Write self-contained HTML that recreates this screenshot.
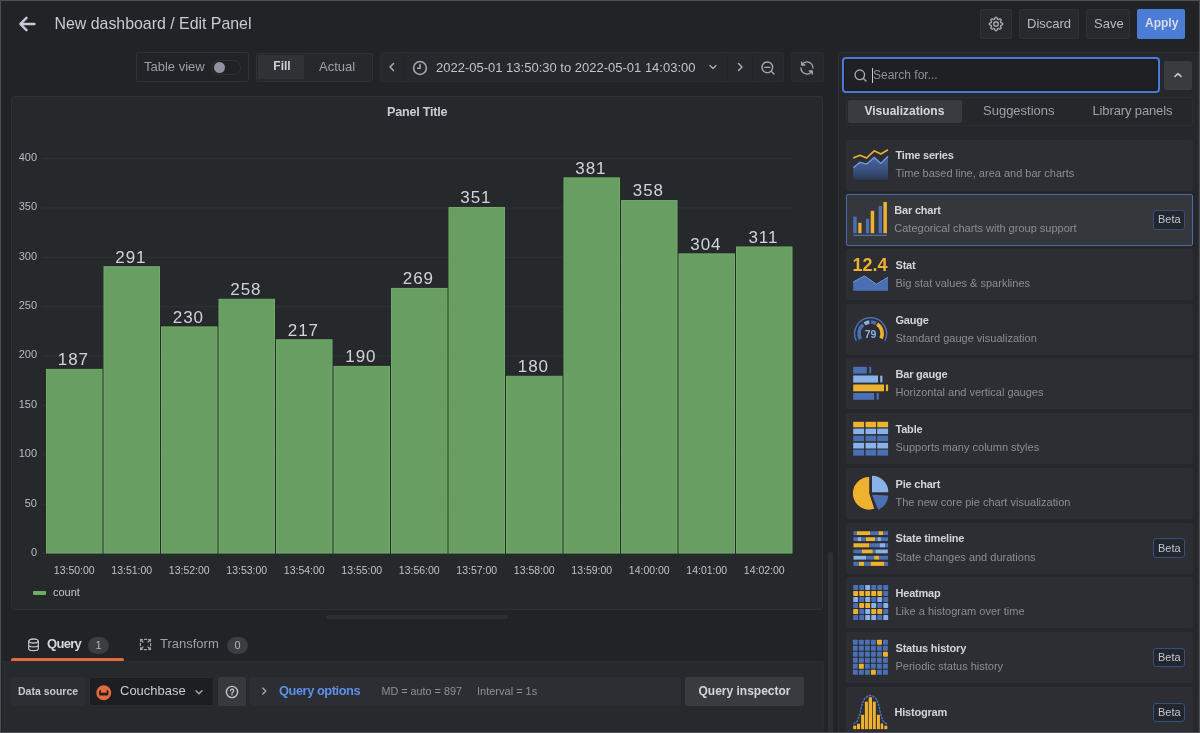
<!DOCTYPE html>
<html><head><meta charset="utf-8">
<style>
*{box-sizing:border-box;margin:0;padding:0}
html,body{width:1200px;height:733px;overflow:hidden;background:#212327}
body{font-family:"Liberation Sans",sans-serif;color:#c9cad2;position:relative;-webkit-font-smoothing:antialiased}
.layer{position:absolute;left:0;top:0;width:1200px;height:733px;will-change:transform}
svg text{font-family:"Liberation Sans",sans-serif}
.abs{position:absolute}
#frame{position:absolute;left:0;top:0;width:1200px;height:733px;border:1px solid #4b4e55;pointer-events:none;z-index:50}
.btn{position:absolute;background:#27292d;border:1px solid #2f3135;border-radius:2px}
.t{position:absolute;white-space:pre;line-height:1}
.card{position:absolute;left:846px;width:346.5px;height:51px;background:#2c2e33;border-radius:2px}
.ct{position:absolute;left:49.5px;top:11px;font-size:10.5px;font-weight:bold;color:#d3d4db;white-space:pre;line-height:1}
.cd{position:absolute;left:49.5px;top:29px;font-size:11px;color:#8f9098;white-space:pre;line-height:1}
.ic{position:absolute;left:6px;top:8px}
.beta{position:absolute;left:307px;top:15.5px;width:32px;height:19.5px;border:1px solid #3a5583;border-radius:3px;background:#2a2f3a;font-size:11px;color:#c3c5cf;text-align:center;line-height:17.5px}
</style></head><body>
<div id="frame"></div>
<div class="layer">

<!-- TOP BAR -->
<svg class="abs" style="left:18px;top:15px" width="18" height="18" viewBox="0 0 18 18">
<path d="M16.5 9H2.5M8.5 2.8L2.3 9l6.2 6.2" stroke="#c9cad6" stroke-width="2.4" fill="none" stroke-linecap="round" stroke-linejoin="round"/></svg>
<div class="t" style="left:54.5px;top:15.9px;font-size:15.9px;color:#cacbd3">New dashboard / Edit Panel</div>

<div class="btn" style="left:980px;top:9px;width:32px;height:30px"></div>
<svg class="abs" style="left:987px;top:14.8px" width="18" height="18" viewBox="0 0 18 18"><circle cx="9" cy="9" r="2.2" fill="none" stroke="#a9aab4" stroke-width="1.4"/><path d="M15.60 9.00L15.59 9.26L15.58 9.52L15.51 9.77L15.12 9.97L14.69 10.13L14.26 10.26L13.86 10.37L13.76 10.55L13.69 10.73L13.62 10.91L13.54 11.09L13.46 11.27L13.40 11.47L13.61 11.82L13.82 12.22L14.01 12.64L14.15 13.06L14.02 13.29L13.85 13.48L13.67 13.67L13.48 13.85L13.29 14.02L13.06 14.15L12.64 14.01L12.22 13.82L11.82 13.61L11.47 13.40L11.27 13.46L11.09 13.54L10.91 13.62L10.73 13.69L10.55 13.76L10.37 13.86L10.26 14.26L10.13 14.69L9.97 15.12L9.77 15.51L9.52 15.58L9.26 15.59L9.00 15.60L8.74 15.59L8.48 15.58L8.23 15.51L8.03 15.12L7.87 14.69L7.74 14.26L7.63 13.86L7.45 13.76L7.27 13.69L7.09 13.62L6.91 13.54L6.73 13.46L6.53 13.40L6.18 13.61L5.78 13.82L5.36 14.01L4.94 14.15L4.71 14.02L4.52 13.85L4.33 13.67L4.15 13.48L3.98 13.29L3.85 13.06L3.99 12.64L4.18 12.22L4.39 11.82L4.60 11.47L4.54 11.27L4.46 11.09L4.38 10.91L4.31 10.73L4.24 10.55L4.14 10.37L3.74 10.26L3.31 10.13L2.88 9.97L2.49 9.77L2.42 9.52L2.41 9.26L2.40 9.00L2.41 8.74L2.42 8.48L2.49 8.23L2.88 8.03L3.31 7.87L3.74 7.74L4.14 7.63L4.24 7.45L4.31 7.27L4.38 7.09L4.46 6.91L4.54 6.73L4.60 6.53L4.39 6.18L4.18 5.78L3.99 5.36L3.85 4.94L3.98 4.71L4.15 4.52L4.33 4.33L4.52 4.15L4.71 3.98L4.94 3.85L5.36 3.99L5.78 4.18L6.18 4.39L6.53 4.60L6.73 4.54L6.91 4.46L7.09 4.38L7.27 4.31L7.45 4.24L7.63 4.14L7.74 3.74L7.87 3.31L8.03 2.88L8.23 2.49L8.48 2.42L8.74 2.41L9.00 2.40L9.26 2.41L9.52 2.42L9.77 2.49L9.97 2.88L10.13 3.31L10.26 3.74L10.37 4.14L10.55 4.24L10.73 4.31L10.91 4.38L11.09 4.46L11.27 4.54L11.47 4.60L11.82 4.39L12.22 4.18L12.64 3.99L13.06 3.85L13.29 3.98L13.48 4.15L13.67 4.33L13.85 4.52L14.02 4.71L14.15 4.94L14.01 5.36L13.82 5.78L13.61 6.18L13.40 6.53L13.46 6.73L13.54 6.91L13.62 7.09L13.69 7.27L13.76 7.45L13.86 7.63L14.26 7.74L14.69 7.87L15.12 8.03L15.51 8.23L15.58 8.48L15.59 8.74L15.60 9.00Z" fill="none" stroke="#a9aab4" stroke-width="1.35" stroke-linejoin="round"/></svg>
<div class="btn" style="left:1019px;top:9px;width:60px;height:30px"></div>
<div class="t" style="left:1027px;top:16.7px;font-size:13px;color:#b9bac3">Discard</div>
<div class="btn" style="left:1086px;top:9px;width:44px;height:30px"></div>
<div class="t" style="left:1094px;top:16.7px;font-size:13px;color:#b9bac3">Save</div>
<div class="abs" style="left:1137px;top:9px;width:48px;height:30px;background:#4b7cd6;border-radius:2px"></div>
<div class="t" style="left:1145px;top:17.2px;font-size:12px;color:#d5dbea;font-weight:bold">Apply</div>

<!-- TOOLBAR -->
<div class="btn" style="left:136px;top:52px;width:113px;height:30px;background:#212327;border-color:#2f3136"></div>
<div class="t" style="left:144px;top:59.7px;font-size:13px;color:#9d9ea7">Table view</div>
<div class="abs" style="left:211px;top:59.5px;width:30px;height:15px;border-radius:8px;background:#1f2124;border:1px solid #303236"></div>
<div class="abs" style="left:214px;top:61.5px;width:11px;height:11px;border-radius:6px;background:#9092a0"></div>

<div class="btn" style="left:256px;top:52.5px;width:117px;height:29px;background:#26292c;border-color:#2e3034"></div>
<div class="abs" style="left:258px;top:55px;width:46px;height:24px;background:#303236;border-radius:1px"></div>
<div class="t" style="left:273.3px;top:60.3px;font-size:12px;font-weight:bold;color:#d0d1d9">Fill</div>
<div class="t" style="left:319px;top:60.2px;font-size:13px;color:#9fa0a8">Actual</div>

<div class="btn" style="left:380px;top:52px;width:404px;height:30px;background:#26282c;border-color:#2a2c30"></div>
<div class="abs" style="left:404px;top:53px;width:1px;height:28px;background:#222428"></div>
<div class="abs" style="left:727px;top:53px;width:1px;height:28px;background:#222428"></div>
<div class="abs" style="left:752px;top:53px;width:1px;height:28px;background:#222428"></div>
<svg class="abs" style="left:386px;top:61px" width="12" height="12" viewBox="0 0 12 12"><path d="M7.5 2.5L4 6l3.5 3.5" stroke="#a9aab3" stroke-width="1.5" fill="none" stroke-linecap="round" stroke-linejoin="round"/></svg>
<svg class="abs" style="left:412px;top:60px" width="16" height="16" viewBox="0 0 16 16"><circle cx="8" cy="8" r="6.4" fill="none" stroke="#a9aab3" stroke-width="1.5"/><path d="M8 4.6V8.2H5.6" stroke="#a9aab3" stroke-width="1.5" fill="none" stroke-linecap="round"/></svg>
<div class="t" style="left:436px;top:60.5px;font-size:13px;color:#c2c3cb">2022-05-01 13:50:30 to 2022-05-01 14:03:00</div>
<svg class="abs" style="left:707px;top:61px" width="12" height="12" viewBox="0 0 12 12"><path d="M3 4.5L6 7.5l3-3" stroke="#a9aab3" stroke-width="1.4" fill="none" stroke-linecap="round" stroke-linejoin="round"/></svg>
<svg class="abs" style="left:734px;top:61px" width="12" height="12" viewBox="0 0 12 12"><path d="M4.5 2.5L8 6l-3.5 3.5" stroke="#a9aab3" stroke-width="1.5" fill="none" stroke-linecap="round" stroke-linejoin="round"/></svg>
<svg class="abs" style="left:759.5px;top:59.5px" width="16" height="16" viewBox="0 0 24 24"><path fill="#a9aab3" d="M21.71 20.29 18 16.61A9 9 0 1 0 16.61 18l3.68 3.68a1 1 0 0 0 1.42 0A1 1 0 0 0 21.71 20.29ZM11 18a7 7 0 1 1 7-7A7 7 0 0 1 11 18Zm4-8H7a1 1 0 0 0 0 2h8a1 1 0 0 0 0-2Z"/></svg>
<div class="btn" style="left:791px;top:52px;width:33px;height:30px;background:#26282c;border-color:#2a2c30"></div>
<svg class="abs" style="left:799px;top:59.5px" width="16" height="16" viewBox="0 0 24 24"><path fill="#a9aab3" d="M19.91 15.51H15.38a1 1 0 0 0 0 2h2.4A8 8 0 0 1 4 12a1 1 0 0 0-2 0 10 10 0 0 0 16.88 7.23V21a1 1 0 0 0 2 0V16.5A1 1 0 0 0 19.91 15.51ZM12 2A10 10 0 0 0 5.12 4.77V3a1 1 0 0 0-2 0V7.5a1 1 0 0 0 1 1h4.5a1 1 0 0 0 0-2H6.22A8 8 0 0 1 20 12a1 1 0 0 0 2 0A10 10 0 0 0 12 2Z"/></svg>

<!-- PANEL -->
<div class="abs" style="left:10.5px;top:96px;width:812.5px;height:513.5px;background:#26292c;border:1px solid #2e3034;border-radius:3px"></div>
<div class="t" style="left:387px;top:106.2px;font-size:12.6px;font-weight:bold;letter-spacing:-0.22px;color:#cacbd4">Panel Title</div>
<svg class="abs" style="left:0;top:0" width="840" height="610" viewBox="0 0 840 610">
<line x1="42" x2="793" y1="553.50" y2="553.50" stroke="#303337" stroke-width="1"/>
<text x="37" y="555.90" text-anchor="end" font-size="11" fill="#b9bac2">0</text>
<line x1="42" x2="793" y1="504.14" y2="504.14" stroke="#303337" stroke-width="1"/>
<text x="37" y="506.54" text-anchor="end" font-size="11" fill="#b9bac2">50</text>
<line x1="42" x2="793" y1="454.77" y2="454.77" stroke="#303337" stroke-width="1"/>
<text x="37" y="457.17" text-anchor="end" font-size="11" fill="#b9bac2">100</text>
<line x1="42" x2="793" y1="405.41" y2="405.41" stroke="#303337" stroke-width="1"/>
<text x="37" y="407.81" text-anchor="end" font-size="11" fill="#b9bac2">150</text>
<line x1="42" x2="793" y1="356.05" y2="356.05" stroke="#303337" stroke-width="1"/>
<text x="37" y="358.45" text-anchor="end" font-size="11" fill="#b9bac2">200</text>
<line x1="42" x2="793" y1="306.69" y2="306.69" stroke="#303337" stroke-width="1"/>
<text x="37" y="309.09" text-anchor="end" font-size="11" fill="#b9bac2">250</text>
<line x1="42" x2="793" y1="257.32" y2="257.32" stroke="#303337" stroke-width="1"/>
<text x="37" y="259.72" text-anchor="end" font-size="11" fill="#b9bac2">300</text>
<line x1="42" x2="793" y1="207.96" y2="207.96" stroke="#303337" stroke-width="1"/>
<text x="37" y="210.36" text-anchor="end" font-size="11" fill="#b9bac2">350</text>
<line x1="42" x2="793" y1="158.60" y2="158.60" stroke="#303337" stroke-width="1"/>
<text x="37" y="161.00" text-anchor="end" font-size="11" fill="#b9bac2">400</text>
<rect x="46.50" y="369.38" width="55.50" height="183.62" fill="#689e62" stroke="#6fab67" stroke-width="1"/>
<text x="73.35" y="365.28" text-anchor="middle" font-size="17" letter-spacing="0.9" fill="#d2d3da">187</text>
<text x="74.25" y="574.00" text-anchor="middle" font-size="10.5" fill="#c0c1c8">13:50:00</text>
<rect x="104.00" y="266.71" width="55.50" height="286.29" fill="#689e62" stroke="#6fab67" stroke-width="1"/>
<text x="130.85" y="262.61" text-anchor="middle" font-size="17" letter-spacing="0.9" fill="#d2d3da">291</text>
<text x="131.75" y="574.00" text-anchor="middle" font-size="10.5" fill="#c0c1c8">13:51:00</text>
<rect x="161.50" y="326.93" width="55.50" height="226.07" fill="#689e62" stroke="#6fab67" stroke-width="1"/>
<text x="188.35" y="322.83" text-anchor="middle" font-size="17" letter-spacing="0.9" fill="#d2d3da">230</text>
<text x="189.25" y="574.00" text-anchor="middle" font-size="10.5" fill="#c0c1c8">13:52:00</text>
<rect x="219.00" y="299.29" width="55.50" height="253.71" fill="#689e62" stroke="#6fab67" stroke-width="1"/>
<text x="245.85" y="295.19" text-anchor="middle" font-size="17" letter-spacing="0.9" fill="#d2d3da">258</text>
<text x="246.75" y="574.00" text-anchor="middle" font-size="10.5" fill="#c0c1c8">13:53:00</text>
<rect x="276.50" y="339.77" width="55.50" height="213.23" fill="#689e62" stroke="#6fab67" stroke-width="1"/>
<text x="303.35" y="335.67" text-anchor="middle" font-size="17" letter-spacing="0.9" fill="#d2d3da">217</text>
<text x="304.25" y="574.00" text-anchor="middle" font-size="10.5" fill="#c0c1c8">13:54:00</text>
<rect x="334.00" y="366.42" width="55.50" height="186.58" fill="#689e62" stroke="#6fab67" stroke-width="1"/>
<text x="360.85" y="362.32" text-anchor="middle" font-size="17" letter-spacing="0.9" fill="#d2d3da">190</text>
<text x="361.75" y="574.00" text-anchor="middle" font-size="10.5" fill="#c0c1c8">13:55:00</text>
<rect x="391.50" y="288.43" width="55.50" height="264.57" fill="#689e62" stroke="#6fab67" stroke-width="1"/>
<text x="418.35" y="284.33" text-anchor="middle" font-size="17" letter-spacing="0.9" fill="#d2d3da">269</text>
<text x="419.25" y="574.00" text-anchor="middle" font-size="10.5" fill="#c0c1c8">13:56:00</text>
<rect x="449.00" y="207.48" width="55.50" height="345.52" fill="#689e62" stroke="#6fab67" stroke-width="1"/>
<text x="475.85" y="203.38" text-anchor="middle" font-size="17" letter-spacing="0.9" fill="#d2d3da">351</text>
<text x="476.75" y="574.00" text-anchor="middle" font-size="10.5" fill="#c0c1c8">13:57:00</text>
<rect x="506.50" y="376.30" width="55.50" height="176.70" fill="#689e62" stroke="#6fab67" stroke-width="1"/>
<text x="533.35" y="372.19" text-anchor="middle" font-size="17" letter-spacing="0.9" fill="#d2d3da">180</text>
<text x="534.25" y="574.00" text-anchor="middle" font-size="10.5" fill="#c0c1c8">13:58:00</text>
<rect x="564.00" y="177.86" width="55.50" height="375.14" fill="#689e62" stroke="#6fab67" stroke-width="1"/>
<text x="590.85" y="173.76" text-anchor="middle" font-size="17" letter-spacing="0.9" fill="#d2d3da">381</text>
<text x="591.75" y="574.00" text-anchor="middle" font-size="10.5" fill="#c0c1c8">13:59:00</text>
<rect x="621.50" y="200.56" width="55.50" height="352.44" fill="#689e62" stroke="#6fab67" stroke-width="1"/>
<text x="648.35" y="196.46" text-anchor="middle" font-size="17" letter-spacing="0.9" fill="#d2d3da">358</text>
<text x="649.25" y="574.00" text-anchor="middle" font-size="10.5" fill="#c0c1c8">14:00:00</text>
<rect x="679.00" y="253.88" width="55.50" height="299.12" fill="#689e62" stroke="#6fab67" stroke-width="1"/>
<text x="705.85" y="249.78" text-anchor="middle" font-size="17" letter-spacing="0.9" fill="#d2d3da">304</text>
<text x="706.75" y="574.00" text-anchor="middle" font-size="10.5" fill="#c0c1c8">14:01:00</text>
<rect x="736.50" y="246.97" width="55.50" height="306.03" fill="#689e62" stroke="#6fab67" stroke-width="1"/>
<text x="763.35" y="242.87" text-anchor="middle" font-size="17" letter-spacing="0.9" fill="#d2d3da">311</text>
<text x="764.25" y="574.00" text-anchor="middle" font-size="10.5" fill="#c0c1c8">14:02:00</text>
</svg>
<div class="abs" style="left:33px;top:591px;width:12.5px;height:3.5px;background:#6cae64;border-radius:1px"></div>
<div class="t" style="left:53px;top:586.5px;font-size:11px;color:#c4c5cc">count</div>
<div class="abs" style="left:326px;top:615px;width:182px;height:4px;background:#2d2f33;border-radius:2px"></div>

<!-- QUERY TABS -->
<svg class="abs" style="left:26.5px;top:638.3px" width="13" height="14" viewBox="0 0 13 14"><ellipse cx="6.5" cy="3" rx="4.8" ry="2" fill="none" stroke="#c4c5cd" stroke-width="1.3"/><path d="M1.7 3v7.8c0 1.1 2.1 1.9 4.8 1.9s4.8-.8 4.8-1.9V3M1.7 7c0 1.1 2.1 1.9 4.8 1.9s4.8-.8 4.8-1.9" fill="none" stroke="#c4c5cd" stroke-width="1.2"/></svg>
<div class="t" style="left:47px;top:637.3px;font-size:13px;font-weight:bold;letter-spacing:-0.7px;color:#d6d7de">Query</div>
<div class="abs" style="left:88px;top:637px;width:21px;height:17px;border-radius:9px;background:#3b3d41"></div>
<div class="t" style="left:95.5px;top:640.2px;font-size:11px;color:#b4b5bd">1</div>
<svg class="abs" style="left:139px;top:638.3px" width="13" height="13" viewBox="0 0 13 13"><g fill="#a3a4ac"><path d="M0.8 0.8L4.4 1.3L1.3 4.4Z"/><path d="M12.2 0.8L11.7 4.4L8.6 1.3Z"/><path d="M12.2 12.2L8.6 11.7L11.7 8.6Z"/><path d="M0.8 12.2L1.3 8.6L4.4 11.7Z"/></g><g fill="none" stroke="#a3a4ac" stroke-width="1.2" stroke-linecap="round"><path d="M2.2 2.2L4 4"/><path d="M10.8 2.2L9 4"/><path d="M10.8 10.8L9 9"/><path d="M2.2 10.8L4 9"/><path d="M5.6 1.4H7.6"/><path d="M11.6 5.6V7.6"/><path d="M7.4 11.6H5.4"/><path d="M1.4 7.4V5.4"/></g></svg>
<div class="t" style="left:160px;top:637.3px;font-size:13px;color:#9fa0a8">Transform</div>
<div class="abs" style="left:227px;top:637px;width:21px;height:17px;border-radius:9px;background:#3b3d41"></div>
<div class="t" style="left:234.5px;top:640.2px;font-size:11px;color:#b4b5bd">0</div>
<div class="abs" style="left:11px;top:657.5px;width:113px;height:4px;background:#e4693d;border-radius:2px"></div>

<!-- QUERY EDITOR -->
<div class="abs" style="left:1px;top:661px;width:822.5px;height:80px;background:#272a2d;box-shadow:inset 1px 0 0 #1f2124;border-top:1px solid #2a2c30;border-right:1px solid #2a2c30;border-radius:0 3px 0 0"></div>
<div class="abs" style="left:11px;top:677px;width:73.5px;height:28.5px;background:#2c2e33;border-radius:2px"></div>
<div class="t" style="left:18px;top:686px;font-size:10.5px;font-weight:bold;color:#c8c9d0">Data source</div>
<div class="abs" style="left:89px;top:677px;width:124.5px;height:28.5px;background:#1d1e22;border:1px solid #2b2d31;border-radius:2px"></div>
<svg class="abs" style="left:96px;top:685px" width="15.5" height="15.5" viewBox="0 0 16 16"><circle cx="8" cy="8" r="7.7" fill="#e56a3a"/><rect x="3.2" y="5.2" width="9.6" height="5.6" rx="1.6" fill="#2a1d19"/><rect x="5" y="5" width="6" height="3" rx="0.6" fill="#e56a3a"/></svg>
<div class="t" style="left:120px;top:684px;font-size:13px;color:#c9cad2">Couchbase</div>
<svg class="abs" style="left:193px;top:686px" width="12" height="12" viewBox="0 0 12 12"><path d="M3 4.8L6 7.8l3-3" stroke="#a9aab3" stroke-width="1.4" fill="none" stroke-linecap="round" stroke-linejoin="round"/></svg>
<div class="abs" style="left:218px;top:677px;width:28px;height:28.5px;background:#37393d;border-radius:2px"></div>
<svg class="abs" style="left:224px;top:683.5px" width="16" height="16" viewBox="0 0 16 16"><circle cx="8" cy="8" r="5.6" fill="none" stroke="#c4c5cd" stroke-width="1.4"/><path d="M6.5 6.6a1.6 1.6 0 1 1 2.2 1.5c-.4.2-.7.5-.7 1v.2" stroke="#c4c5cd" stroke-width="1.3" fill="none" stroke-linecap="round"/><circle cx="8" cy="10.8" r=".75" fill="#c4c5cd"/></svg>
<div class="abs" style="left:249.5px;top:677px;width:431px;height:28.5px;background:#2c2e33;border-radius:2px"></div>
<svg class="abs" style="left:258px;top:685px" width="12" height="12" viewBox="0 0 12 12"><path d="M4.8 3L7.8 6l-3 3" stroke="#a9aab3" stroke-width="1.3" fill="none" stroke-linecap="round" stroke-linejoin="round"/></svg>
<div class="t" style="left:279px;top:684.6px;font-size:12.8px;font-weight:bold;letter-spacing:-0.43px;color:#5f90e6">Query options</div>
<div class="t" style="left:381.5px;top:685.6px;font-size:10.8px;color:#8f9098">MD = auto = 897</div>
<div class="t" style="left:477px;top:685.6px;font-size:11px;color:#8f9098">Interval = 1s</div>
<div class="abs" style="left:685px;top:677px;width:119px;height:28.5px;background:#393b3f;border-radius:2px"></div>
<div class="t" style="left:698.5px;top:685px;font-size:12px;font-weight:bold;color:#d4d5dc">Query inspector</div>

<!-- scrollbar left pane -->
<div class="abs" style="left:828px;top:552px;width:5px;height:181px;background:#2d2f33;border-radius:3px"></div>

<!-- RIGHT PANE -->
<div class="abs" style="left:838px;top:52px;width:361px;height:681px;background:#25272b;border:1px solid #2c2e32;border-right-color:#2c2e32"></div>
<div class="abs" style="left:842px;top:57px;width:318px;height:36px;background:#1f2024;border:2px solid #4a7bd2;border-radius:4px;box-shadow:inset 0 0 0 1px #18191c"></div>
<svg class="abs" style="left:852.5px;top:68px" width="16" height="16" viewBox="0 0 16 16"><circle cx="6.8" cy="6.8" r="4.8" fill="none" stroke="#a7a8b0" stroke-width="1.3"/><path d="M10.4 10.4l2.6 2.6" stroke="#a7a8b0" stroke-width="1.4" stroke-linecap="round"/></svg>
<div class="abs" style="left:872px;top:67.5px;width:1px;height:15px;background:#c9cad2"></div>
<div class="t" style="left:873px;top:68.5px;font-size:12px;color:#8e8f97">Search for...</div>
<div class="abs" style="left:1163.5px;top:60.5px;width:28.5px;height:29.5px;background:#393b3f;border-radius:2px"></div>
<svg class="abs" style="left:1171px;top:69px" width="14" height="12" viewBox="0 0 14 12"><path d="M4 7.4L7 4.6l3 2.8" stroke="#c9cad2" stroke-width="1.5" fill="none" stroke-linecap="round" stroke-linejoin="round"/></svg>

<div class="abs" style="left:845.5px;top:97px;width:347px;height:28.5px;background:#25272b;border:1px solid #2c2e32;border-radius:2px"></div>
<div class="abs" style="left:848px;top:99.5px;width:113.5px;height:23px;background:#393b40;border-radius:2px"></div>
<div class="t" style="left:864.5px;top:104.5px;font-size:12px;font-weight:bold;color:#d4d5dc">Visualizations</div>
<div class="t" style="left:983px;top:104px;font-size:13px;color:#9fa0a8">Suggestions</div>
<div class="t" style="left:1092.5px;top:104px;font-size:13px;letter-spacing:-0.13px;color:#9fa0a8">Library panels</div>

<div class="card" style="top:139.5px;background:#2c2e33;"></div>
<svg class="abs" style="left:846px;top:139.5px" width="50" height="50" viewBox="0 0 50 50"><defs><linearGradient id="tsg" x1="0" y1="0" x2="0" y2="1"><stop offset="0" stop-color="#4a68a6"/><stop offset="0.55" stop-color="#3a5282"/><stop offset="1" stop-color="#2c3652"/></linearGradient></defs><polygon points="7.2,40.0 7.2,27.8 14.0,22.3 20.6,24.1 28.2,17.5 34.8,23.4 42.0,16.2 42.0,40.0" fill="url(#tsg)"/><polyline points="7.2,27.8 14.0,22.3 20.6,24.1 28.2,17.5 34.8,23.4 42.0,16.2" fill="none" stroke="#6f9ae0" stroke-width="1.4"/><polyline points="7.2,18.0 14.0,15.3 20.6,18.0 28.2,10.8 34.8,14.0 42.0,9.7" fill="none" stroke="#efb22e" stroke-width="1.6" stroke-linejoin="round"/></svg>
<div class="t" style="left:895.5px;top:150.3px;font-size:11px;font-weight:bold;letter-spacing:-0.2px;color:#d3d4db">Time series</div>
<div class="t" style="left:895.5px;top:168.4px;font-size:11px;color:#8c8d95">Time based line, area and bar charts</div>
<div class="card" style="top:194.2px;background:#35373c;border:1px solid #4a6eaa;height:52px;"></div>
<svg class="abs" style="left:846px;top:194.2px" width="50" height="50" viewBox="0 0 50 50"><rect x="7.2" y="22.7" width="3.5" height="16.5" fill="#4a6fb3"/><rect x="12.3" y="28.8" width="3.2" height="10.4" fill="#efb22e"/><rect x="19.9" y="24.8" width="3.3" height="14.4" fill="#4a6fb3"/><rect x="24.7" y="16.8" width="3.5" height="22.4" fill="#efb22e"/><rect x="32.6" y="12.0" width="3.4" height="27.2" fill="#4a6fb3"/><rect x="37.4" y="8.0" width="3.5" height="31.2" fill="#efb22e"/><rect x="7.2" y="40.7" width="33.7" height="1.3" fill="#4a6fb3"/></svg>
<div class="t" style="left:894.3px;top:205.0px;font-size:11px;font-weight:bold;letter-spacing:-0.2px;color:#d3d4db">Bar chart</div>
<div class="t" style="left:894.3px;top:223.1px;font-size:11px;color:#8c8d95">Categorical charts with group support</div>
<div class="abs" style="left:1153px;top:210.0px;width:32px;height:19.7px;border:1px solid #35507e;border-radius:3px;background:#22262e"></div>
<div class="t" style="left:1158px;top:214.3px;font-size:11px;color:#c3c5cf">Beta</div>
<div class="card" style="top:248.9px;background:#2c2e33;"></div>
<svg class="abs" style="left:846px;top:248.9px" width="50" height="50" viewBox="0 0 50 50"><polygon points="7.2,41.8 7.2,32.9 18.4,26.9 30.4,35.2 42.0,28.2 42.0,41.8" fill="#4a6fb3"/><polyline points="7.2,32.9 18.4,26.9 30.4,35.2 42.0,28.2" fill="none" stroke="#6f9ae0" stroke-width="1"/><text x="6.5" y="21.7" font-size="17.8" font-weight="bold" fill="#efb22e" textLength="35" lengthAdjust="spacingAndGlyphs">12.4</text></svg>
<div class="t" style="left:895.5px;top:259.8px;font-size:11px;font-weight:bold;letter-spacing:-0.2px;color:#d3d4db">Stat</div>
<div class="t" style="left:895.5px;top:277.8px;font-size:11px;color:#8c8d95">Big stat values &amp; sparklines</div>
<div class="card" style="top:303.7px;background:#2c2e33;"></div>
<svg class="abs" style="left:846px;top:303.7px" width="50" height="50" viewBox="0 0 50 50"><path d="M10.34 36.89A16 16 0 1 1 38.86 36.89" fill="none" stroke="#4a6fb3" stroke-width="1.5"/><path d="M14.36 35.07A11.6 11.6 0 0 1 17.14 20.74" fill="none" stroke="#4a6fb3" stroke-width="3.6"/><path d="M18.45 19.79A11.6 11.6 0 0 1 23.39 18.09" fill="none" stroke="#8ab2ea" stroke-width="3.6"/><path d="M25.00 18.03A11.6 11.6 0 0 1 30.05 19.38" fill="none" stroke="#4a6fb3" stroke-width="3.6"/><path d="M31.09 20.01A11.6 11.6 0 0 1 35.11 34.53" fill="none" stroke="#efb22e" stroke-width="3.6"/><text x="24.6" y="33.9" text-anchor="middle" font-size="10.5" font-weight="bold" fill="#8ab2ea">79</text></svg>
<div class="t" style="left:895.5px;top:314.5px;font-size:11px;font-weight:bold;letter-spacing:-0.2px;color:#d3d4db">Gauge</div>
<div class="t" style="left:895.5px;top:332.6px;font-size:11px;color:#8c8d95">Standard gauge visualization</div>
<div class="card" style="top:358.4px;background:#2c2e33;"></div>
<svg class="abs" style="left:846px;top:358.4px" width="50" height="50" viewBox="0 0 50 50"><rect x="7.2" y="8.8" width="13.6" height="6.8" fill="#4a6fb3"/><rect x="23.3" y="8.8" width="1.9" height="6.8" rx="0.8" fill="#4a6fb3"/><rect x="7.2" y="17.5" width="24.8" height="7.1" fill="#8ab2ea"/><rect x="34.2" y="17.5" width="2.2" height="7.1" rx="0.8" fill="#8ab2ea"/><rect x="7.2" y="26.5" width="30.8" height="6.8" fill="#efb22e"/><rect x="39.9" y="26.5" width="2.2" height="6.8" rx="0.8" fill="#efb22e"/><rect x="7.2" y="35.0" width="21.0" height="6.8" fill="#4a6fb3"/><rect x="30.6" y="35.0" width="2.2" height="6.8" rx="0.8" fill="#4a6fb3"/></svg>
<div class="t" style="left:895.5px;top:369.2px;font-size:11px;font-weight:bold;letter-spacing:-0.2px;color:#d3d4db">Bar gauge</div>
<div class="t" style="left:895.5px;top:387.3px;font-size:11px;color:#8c8d95">Horizontal and vertical gauges</div>
<div class="card" style="top:413.1px;background:#2c2e33;"></div>
<svg class="abs" style="left:846px;top:413.1px" width="50" height="50" viewBox="0 0 50 50"><rect x="7.2" y="8.8" width="10.9" height="5.5" fill="#efb22e"/><rect x="19.5" y="8.8" width="10.6" height="5.5" fill="#efb22e"/><rect x="31.2" y="8.8" width="10.9" height="5.5" fill="#efb22e"/><rect x="7.2" y="15.6" width="10.9" height="5.5" fill="#8ab2ea"/><rect x="19.5" y="15.6" width="10.6" height="5.5" fill="#8ab2ea"/><rect x="31.2" y="15.6" width="10.9" height="5.5" fill="#8ab2ea"/><rect x="7.2" y="22.7" width="10.9" height="5.5" fill="#4a6fb3"/><rect x="19.5" y="22.7" width="10.6" height="5.5" fill="#4a6fb3"/><rect x="31.2" y="22.7" width="10.9" height="5.5" fill="#4a6fb3"/><rect x="7.2" y="29.8" width="10.9" height="5.7" fill="#8ab2ea"/><rect x="19.5" y="29.8" width="10.6" height="5.7" fill="#8ab2ea"/><rect x="31.2" y="29.8" width="10.9" height="5.7" fill="#8ab2ea"/><rect x="7.2" y="36.6" width="10.9" height="6.0" fill="#4a6fb3"/><rect x="19.5" y="36.6" width="10.6" height="6.0" fill="#4a6fb3"/><rect x="31.2" y="36.6" width="10.9" height="6.0" fill="#4a6fb3"/></svg>
<div class="t" style="left:895.5px;top:423.9px;font-size:11px;font-weight:bold;letter-spacing:-0.2px;color:#d3d4db">Table</div>
<div class="t" style="left:895.5px;top:442.0px;font-size:11px;color:#8c8d95">Supports many column styles</div>
<div class="card" style="top:467.9px;background:#2c2e33;"></div>
<svg class="abs" style="left:846px;top:467.9px" width="50" height="50" viewBox="0 0 50 50"><path d="M23.20 25.35L23.20 9.05A16.3 16.3 0 1 0 28.24 40.85Z" fill="#efb22e"/><path d="M26.00 24.15L26.00 7.85A16.3 16.3 0 0 1 42.30 24.15Z" fill="#8ab2ea"/><path d="M26.00 26.75L42.28 27.60A16.3 16.3 0 0 1 32.11 41.86Z" fill="#4a6fb3"/></svg>
<div class="t" style="left:895.5px;top:478.7px;font-size:11px;font-weight:bold;letter-spacing:-0.2px;color:#d3d4db">Pie chart</div>
<div class="t" style="left:895.5px;top:496.8px;font-size:11px;color:#8c8d95">The new core pie chart visualization</div>
<div class="card" style="top:522.6px;background:#2c2e33;"></div>
<svg class="abs" style="left:846px;top:522.6px" width="50" height="50" viewBox="0 0 50 50"><rect x="7.46" y="8.24" width="3.27" height="3.82" fill="#4a6fb3"/><rect x="10.73" y="8.24" width="13.37" height="3.82" fill="#efb22e"/><rect x="24.09" y="8.24" width="8.46" height="3.82" fill="#4a6fb3"/><rect x="32.55" y="8.24" width="4.64" height="3.82" fill="#efb22e"/><rect x="37.19" y="8.24" width="4.91" height="3.82" fill="#4a6fb3"/><rect x="7.46" y="14.24" width="12.55" height="3.82" fill="#4a6fb3"/><rect x="20.00" y="14.24" width="9.27" height="3.82" fill="#efb22e"/><rect x="29.28" y="14.24" width="12.82" height="3.82" fill="#4a6fb3"/><rect x="11.82" y="14.24" width="3.27" height="3.82" fill="#8ab2ea"/><rect x="31.73" y="14.24" width="3.00" height="3.82" fill="#8ab2ea"/><rect x="7.46" y="20.25" width="15.82" height="4.09" fill="#efb22e"/><rect x="23.28" y="20.25" width="10.37" height="4.09" fill="#4a6fb3"/><rect x="33.64" y="20.25" width="5.46" height="4.09" fill="#8ab2ea"/><rect x="39.10" y="20.25" width="3.00" height="4.09" fill="#4a6fb3"/><rect x="7.46" y="26.52" width="8.46" height="3.82" fill="#4a6fb3"/><rect x="15.91" y="26.52" width="10.91" height="3.82" fill="#efb22e"/><rect x="26.82" y="26.52" width="2.73" height="3.82" fill="#4a6fb3"/><rect x="29.55" y="26.52" width="12.27" height="3.82" fill="#8ab2ea"/><rect x="7.46" y="32.79" width="12.82" height="3.82" fill="#8ab2ea"/><rect x="20.28" y="32.79" width="7.91" height="3.82" fill="#4a6fb3"/><rect x="28.19" y="32.79" width="4.91" height="3.82" fill="#efb22e"/><rect x="33.10" y="32.79" width="9.00" height="3.82" fill="#4a6fb3"/><rect x="7.46" y="38.79" width="5.46" height="4.09" fill="#4a6fb3"/><rect x="12.91" y="38.79" width="5.18" height="4.09" fill="#efb22e"/><rect x="18.09" y="38.79" width="6.55" height="4.09" fill="#4a6fb3"/><rect x="24.64" y="38.79" width="13.91" height="4.09" fill="#efb22e"/><rect x="38.55" y="38.79" width="3.55" height="4.09" fill="#4a6fb3"/></svg>
<div class="t" style="left:895.5px;top:533.4px;font-size:11px;font-weight:bold;letter-spacing:-0.2px;color:#d3d4db">State timeline</div>
<div class="t" style="left:895.5px;top:551.5px;font-size:11px;color:#8c8d95">State changes and durations</div>
<div class="abs" style="left:1153px;top:538.4px;width:32px;height:19.7px;border:1px solid #35507e;border-radius:3px;background:#22262e"></div>
<div class="t" style="left:1158px;top:542.7px;font-size:11px;color:#c3c5cf">Beta</div>
<div class="card" style="top:577.3px;background:#2c2e33;"></div>
<svg class="abs" style="left:846px;top:577.3px" width="50" height="50" viewBox="0 0 50 50"><rect x="7.20" y="8.00" width="4.9" height="4.9" rx="0.6" fill="#4a6fb3"/><rect x="13.22" y="8.00" width="4.9" height="4.9" rx="0.6" fill="#4a6fb3"/><rect x="19.24" y="8.00" width="4.9" height="4.9" rx="0.6" fill="#8ab2ea"/><rect x="25.26" y="8.00" width="4.9" height="4.9" rx="0.6" fill="#4a6fb3"/><rect x="31.28" y="8.00" width="4.9" height="4.9" rx="0.6" fill="#4a6fb3"/><rect x="37.30" y="8.00" width="4.9" height="4.9" rx="0.6" fill="#4a6fb3"/><rect x="7.20" y="14.02" width="4.9" height="4.9" rx="0.6" fill="#efb22e"/><rect x="13.22" y="14.02" width="4.9" height="4.9" rx="0.6" fill="#efb22e"/><rect x="19.24" y="14.02" width="4.9" height="4.9" rx="0.6" fill="#efb22e"/><rect x="25.26" y="14.02" width="4.9" height="4.9" rx="0.6" fill="#efb22e"/><rect x="31.28" y="14.02" width="4.9" height="4.9" rx="0.6" fill="#efb22e"/><rect x="37.30" y="14.02" width="4.9" height="4.9" rx="0.6" fill="#4a6fb3"/><rect x="7.20" y="20.04" width="4.9" height="4.9" rx="0.6" fill="#8ab2ea"/><rect x="13.22" y="20.04" width="4.9" height="4.9" rx="0.6" fill="#4a6fb3"/><rect x="19.24" y="20.04" width="4.9" height="4.9" rx="0.6" fill="#8ab2ea"/><rect x="25.26" y="20.04" width="4.9" height="4.9" rx="0.6" fill="#4a6fb3"/><rect x="31.28" y="20.04" width="4.9" height="4.9" rx="0.6" fill="#8ab2ea"/><rect x="37.30" y="20.04" width="4.9" height="4.9" rx="0.6" fill="#4a6fb3"/><rect x="7.20" y="26.06" width="4.9" height="4.9" rx="0.6" fill="#4a6fb3"/><rect x="13.22" y="26.06" width="4.9" height="4.9" rx="0.6" fill="#efb22e"/><rect x="19.24" y="26.06" width="4.9" height="4.9" rx="0.6" fill="#efb22e"/><rect x="25.26" y="26.06" width="4.9" height="4.9" rx="0.6" fill="#8ab2ea"/><rect x="31.28" y="26.06" width="4.9" height="4.9" rx="0.6" fill="#4a6fb3"/><rect x="37.30" y="26.06" width="4.9" height="4.9" rx="0.6" fill="#8ab2ea"/><rect x="7.20" y="32.08" width="4.9" height="4.9" rx="0.6" fill="#efb22e"/><rect x="13.22" y="32.08" width="4.9" height="4.9" rx="0.6" fill="#4a6fb3"/><rect x="19.24" y="32.08" width="4.9" height="4.9" rx="0.6" fill="#8ab2ea"/><rect x="25.26" y="32.08" width="4.9" height="4.9" rx="0.6" fill="#efb22e"/><rect x="31.28" y="32.08" width="4.9" height="4.9" rx="0.6" fill="#efb22e"/><rect x="37.30" y="32.08" width="4.9" height="4.9" rx="0.6" fill="#4a6fb3"/><rect x="7.20" y="38.10" width="4.9" height="4.9" rx="0.6" fill="#4a6fb3"/><rect x="13.22" y="38.10" width="4.9" height="4.9" rx="0.6" fill="#4a6fb3"/><rect x="19.24" y="38.10" width="4.9" height="4.9" rx="0.6" fill="#8ab2ea"/><rect x="25.26" y="38.10" width="4.9" height="4.9" rx="0.6" fill="#8ab2ea"/><rect x="31.28" y="38.10" width="4.9" height="4.9" rx="0.6" fill="#4a6fb3"/><rect x="37.30" y="38.10" width="4.9" height="4.9" rx="0.6" fill="#8ab2ea"/></svg>
<div class="t" style="left:895.5px;top:588.1px;font-size:11px;font-weight:bold;letter-spacing:-0.2px;color:#d3d4db">Heatmap</div>
<div class="t" style="left:895.5px;top:606.2px;font-size:11px;color:#8c8d95">Like a histogram over time</div>
<div class="card" style="top:632.0px;background:#2c2e33;"></div>
<svg class="abs" style="left:846px;top:632.0px" width="50" height="50" viewBox="0 0 50 50"><rect x="6.90" y="7.77" width="4.9" height="4.9" rx="0.6" fill="#4a6fb3"/><rect x="12.92" y="7.77" width="4.9" height="4.9" rx="0.6" fill="#4a6fb3"/><rect x="18.94" y="7.77" width="4.9" height="4.9" rx="0.6" fill="#4a6fb3"/><rect x="24.96" y="7.77" width="4.9" height="4.9" rx="0.6" fill="#4a6fb3"/><rect x="30.98" y="7.77" width="4.9" height="4.9" rx="0.6" fill="#efb22e"/><rect x="37.00" y="7.77" width="4.9" height="4.9" rx="0.6" fill="#4a6fb3"/><rect x="6.90" y="13.79" width="4.9" height="4.9" rx="0.6" fill="#4a6fb3"/><rect x="12.92" y="13.79" width="4.9" height="4.9" rx="0.6" fill="#4a6fb3"/><rect x="18.94" y="13.79" width="4.9" height="4.9" rx="0.6" fill="#4a6fb3"/><rect x="24.96" y="13.79" width="4.9" height="4.9" rx="0.6" fill="#4a6fb3"/><rect x="30.98" y="13.79" width="4.9" height="4.9" rx="0.6" fill="#4a6fb3"/><rect x="37.00" y="13.79" width="4.9" height="4.9" rx="0.6" fill="#4a6fb3"/><rect x="6.90" y="19.81" width="4.9" height="4.9" rx="0.6" fill="#4a6fb3"/><rect x="12.92" y="19.81" width="4.9" height="4.9" rx="0.6" fill="#4a6fb3"/><rect x="18.94" y="19.81" width="4.9" height="4.9" rx="0.6" fill="#4a6fb3"/><rect x="24.96" y="19.81" width="4.9" height="4.9" rx="0.6" fill="#4a6fb3"/><rect x="30.98" y="19.81" width="4.9" height="4.9" rx="0.6" fill="#4a6fb3"/><rect x="37.00" y="19.81" width="4.9" height="4.9" rx="0.6" fill="#efb22e"/><rect x="6.90" y="25.83" width="4.9" height="4.9" rx="0.6" fill="#4a6fb3"/><rect x="12.92" y="25.83" width="4.9" height="4.9" rx="0.6" fill="#4a6fb3"/><rect x="18.94" y="25.83" width="4.9" height="4.9" rx="0.6" fill="#4a6fb3"/><rect x="24.96" y="25.83" width="4.9" height="4.9" rx="0.6" fill="#4a6fb3"/><rect x="30.98" y="25.83" width="4.9" height="4.9" rx="0.6" fill="#4a6fb3"/><rect x="37.00" y="25.83" width="4.9" height="4.9" rx="0.6" fill="#4a6fb3"/><rect x="6.90" y="31.85" width="4.9" height="4.9" rx="0.6" fill="#4a6fb3"/><rect x="12.92" y="31.85" width="4.9" height="4.9" rx="0.6" fill="#efb22e"/><rect x="18.94" y="31.85" width="4.9" height="4.9" rx="0.6" fill="#4a6fb3"/><rect x="24.96" y="31.85" width="4.9" height="4.9" rx="0.6" fill="#4a6fb3"/><rect x="30.98" y="31.85" width="4.9" height="4.9" rx="0.6" fill="#4a6fb3"/><rect x="37.00" y="31.85" width="4.9" height="4.9" rx="0.6" fill="#4a6fb3"/><rect x="6.90" y="37.87" width="4.9" height="4.9" rx="0.6" fill="#4a6fb3"/><rect x="12.92" y="37.87" width="4.9" height="4.9" rx="0.6" fill="#4a6fb3"/><rect x="18.94" y="37.87" width="4.9" height="4.9" rx="0.6" fill="#4a6fb3"/><rect x="24.96" y="37.87" width="4.9" height="4.9" rx="0.6" fill="#efb22e"/><rect x="30.98" y="37.87" width="4.9" height="4.9" rx="0.6" fill="#4a6fb3"/><rect x="37.00" y="37.87" width="4.9" height="4.9" rx="0.6" fill="#4a6fb3"/></svg>
<div class="t" style="left:895.5px;top:642.8px;font-size:11px;font-weight:bold;letter-spacing:-0.2px;color:#d3d4db">Status history</div>
<div class="t" style="left:895.5px;top:660.9px;font-size:11px;color:#8c8d95">Periodic status history</div>
<div class="abs" style="left:1153px;top:647.8px;width:32px;height:19.7px;border:1px solid #35507e;border-radius:3px;background:#22262e"></div>
<div class="t" style="left:1158px;top:652.1px;font-size:11px;color:#c3c5cf">Beta</div>
<div class="card" style="top:686.8px;background:#2c2e33;"></div>
<svg class="abs" style="left:846px;top:686.8px" width="50" height="50" viewBox="0 0 50 50"><rect x="7.20" y="38.65" width="3.00" height="3.50" fill="#efb22e"/><rect x="11.00" y="36.75" width="3.00" height="5.40" fill="#efb22e"/><rect x="15.10" y="27.75" width="3.00" height="14.40" fill="#efb22e"/><rect x="18.90" y="14.65" width="3.00" height="27.50" fill="#efb22e"/><rect x="22.70" y="10.25" width="3.30" height="31.90" fill="#efb22e"/><rect x="26.80" y="14.65" width="3.00" height="27.50" fill="#efb22e"/><rect x="30.90" y="27.75" width="3.00" height="14.40" fill="#efb22e"/><rect x="34.70" y="36.45" width="2.50" height="5.70" fill="#efb22e"/><rect x="38.30" y="38.65" width="3.00" height="3.50" fill="#efb22e"/><polyline points="8.00,36.75 11.30,34.25 12.90,29.85 14.30,25.25 15.10,20.65 16.50,15.95 18.40,11.85 21.90,8.85 24.20,8.45 26.50,8.85 30.10,11.85 32.00,15.95 33.40,20.65 34.20,25.25 35.60,29.85 37.20,34.25 40.50,36.75" fill="none" stroke="#4a6fb3" stroke-width="1.5" stroke-dasharray="1.3 2.1" stroke-linecap="round" stroke-linejoin="round"/></svg>
<div class="t" style="left:894.5px;top:707.4px;font-size:11px;font-weight:bold;letter-spacing:-0.2px;color:#d3d4db">Histogram</div>
<div class="abs" style="left:1153px;top:702.5px;width:32px;height:19.7px;border:1px solid #35507e;border-radius:3px;background:#22262e"></div>
<div class="t" style="left:1158px;top:706.9px;font-size:11px;color:#c3c5cf">Beta</div>

</div>
</body></html>
